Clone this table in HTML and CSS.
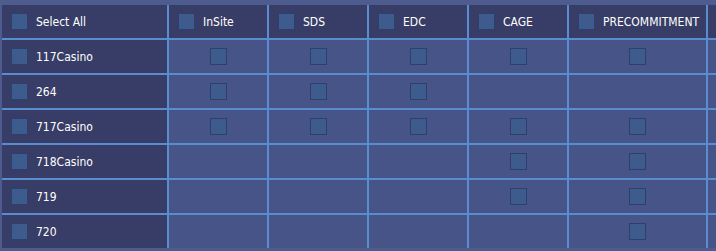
FILE: index.html
```html
<!DOCTYPE html>
<html>
<head>
<meta charset="utf-8">
<link rel="stylesheet" href="styles.css">
</head>
<body>
<div class="frame">
  <div class="grid">
    <div class="hcell first"><span class="cb"></span><span class="lbl">Select All</span></div>
    <div class="hcell"><span class="cb"></span><span class="lbl">InSite</span></div>
    <div class="hcell"><span class="cb"></span><span class="lbl">SDS</span></div>
    <div class="hcell"><span class="cb"></span><span class="lbl">EDC</span></div>
    <div class="hcell"><span class="cb"></span><span class="lbl">CAGE</span></div>
    <div class="hcell"><span class="cb"></span><span class="lbl">PRECOMMITMENT</span></div>
    <div class="hcell extra"></div>

    <div class="rcell"><span class="cb"></span><span class="lbl">117Casino</span></div>
    <div class="dcell"><span class="cb"></span></div>
    <div class="dcell"><span class="cb"></span></div>
    <div class="dcell"><span class="cb"></span></div>
    <div class="dcell"><span class="cb"></span></div>
    <div class="dcell"><span class="cb"></span></div>
    <div class="dcell extra"></div>

    <div class="rcell"><span class="cb"></span><span class="lbl">264</span></div>
    <div class="dcell"><span class="cb"></span></div>
    <div class="dcell"><span class="cb"></span></div>
    <div class="dcell"><span class="cb"></span></div>
    <div class="dcell"></div>
    <div class="dcell"></div>
    <div class="dcell extra"></div>

    <div class="rcell"><span class="cb"></span><span class="lbl">717Casino</span></div>
    <div class="dcell"><span class="cb"></span></div>
    <div class="dcell"><span class="cb"></span></div>
    <div class="dcell"><span class="cb"></span></div>
    <div class="dcell"><span class="cb"></span></div>
    <div class="dcell"><span class="cb"></span></div>
    <div class="dcell extra"></div>

    <div class="rcell"><span class="cb"></span><span class="lbl">718Casino</span></div>
    <div class="dcell"></div>
    <div class="dcell"></div>
    <div class="dcell"></div>
    <div class="dcell"><span class="cb"></span></div>
    <div class="dcell"><span class="cb"></span></div>
    <div class="dcell extra"></div>

    <div class="rcell"><span class="cb"></span><span class="lbl">719</span></div>
    <div class="dcell"></div>
    <div class="dcell"></div>
    <div class="dcell"></div>
    <div class="dcell"><span class="cb"></span></div>
    <div class="dcell"><span class="cb"></span></div>
    <div class="dcell extra"></div>

    <div class="rcell"><span class="cb"></span><span class="lbl">720</span></div>
    <div class="dcell"></div>
    <div class="dcell"></div>
    <div class="dcell"></div>
    <div class="dcell"></div>
    <div class="dcell"><span class="cb"></span></div>
    <div class="dcell extra"></div>
  </div>
</div>
</body>
</html>
```

FILE: styles.css
```css
html, body {
  margin: 0;
  padding: 0;
  background: #4d5b8f;
  overflow: hidden;
}
.frame {
  width: 716px;
  height: 251px;
  padding: 5px 0 0 2px;
  box-sizing: border-box;
  background: #4d5b8f;
}
.grid {
  display: grid;
  grid-template-columns: 165px 98px 98px 98px 98px 137px 20px;
  grid-template-rows: 33px repeat(6, 33px);
  gap: 2px;
  background: #5a8cd0;
  width: 740px;
}
.hcell, .rcell {
  background: #373d66;
  display: flex;
  align-items: center;
  color: #ffffff;
  font-family: "DejaVu Sans Condensed", "DejaVu Sans", sans-serif;
  font-size: 12px;
}
.hcell {
  padding-left: 9px;
}
.rcell {
  padding-left: 9px;
}
.dcell {
  background: #465487;
  display: flex;
  align-items: center;
  justify-content: center;
}
.cb {
  display: inline-block;
  width: 15px;
  height: 15px;
  background: #3e5b8d;
  border: 1px solid #2f3f6c;
  flex: none;
}
.lbl {
  margin-left: 8px;
  white-space: nowrap;
}
.hcell.extra { padding: 0; }
```
